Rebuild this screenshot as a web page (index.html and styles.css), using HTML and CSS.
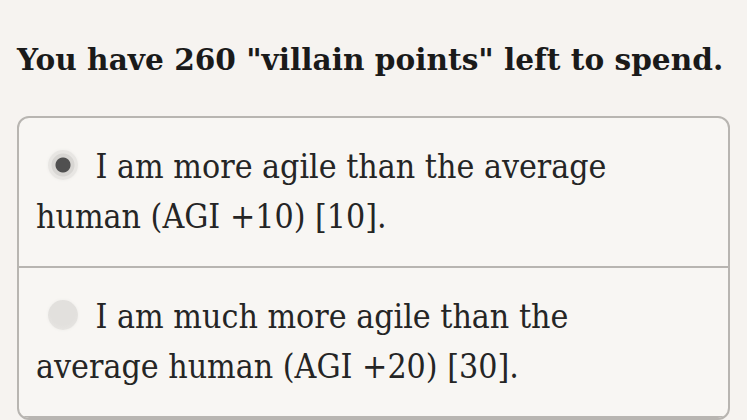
FILE: index.html
```html
<!DOCTYPE html>
<html lang="en">
<head>
  <meta charset="UTF-8" />
  <title>Villain points</title>
  <link rel="stylesheet" href="styles.css">
</head>
<body>
  <div class="page">
    <h2 class="points">You have 260 "villain points" left to spend.</h2>
    <div class="choices">
      <label class="choice">
        <span class="radio checked"></span>
        I am more agile than the average human (AGI +10) [10].
      </label>
      <label class="choice">
        <span class="radio"></span>
        I am much more agile than the average human (AGI +20) [30].
      </label>
    </div>
  </div>
</body>
</html>
```

FILE: styles.css
```css
body {
  margin: 0;
  padding: 0;
  background: #f6f3f0;
  font-family: "DejaVu Serif Condensed", "DejaVu Serif", serif;
  font-stretch: condensed;
  color: #252525;
}
.page {
  padding: 0 17px;
}
.points {
  margin: 0;
  padding-top: 42px;
  font-family: "DejaVu Serif", serif;
  font-stretch: normal;
  font-size: 29.6px;
  line-height: 36px;
  color: #1a1a1a;
}
.choices {
  margin-top: 38px;
  border: 2px solid #b8b5b1;
  border-radius: 12px;
  background: #f8f6f3;
  overflow: hidden;
}
.choice {
  display: block;
  padding: 24px 30px 24px 17px;
  font-size: 33.6px;
  line-height: 50px;
  border-bottom: 2px solid #b8b5b1;
}
.radio {
  display: inline-block;
  width: 30px;
  height: 30px;
  margin: 0 8px 0 12px;
  border-radius: 50%;
  background: radial-gradient(circle at 50% 40%, #e2e0dd 55%, #ebe9e6 100%);
  box-shadow: 0 0 3px #ecebe8;
  vertical-align: -2px;
}
.radio.checked {
  background: radial-gradient(circle, #505050 0 7px, #d8d6d3 8px 11px, #e8e6e3 12px);
}
```
